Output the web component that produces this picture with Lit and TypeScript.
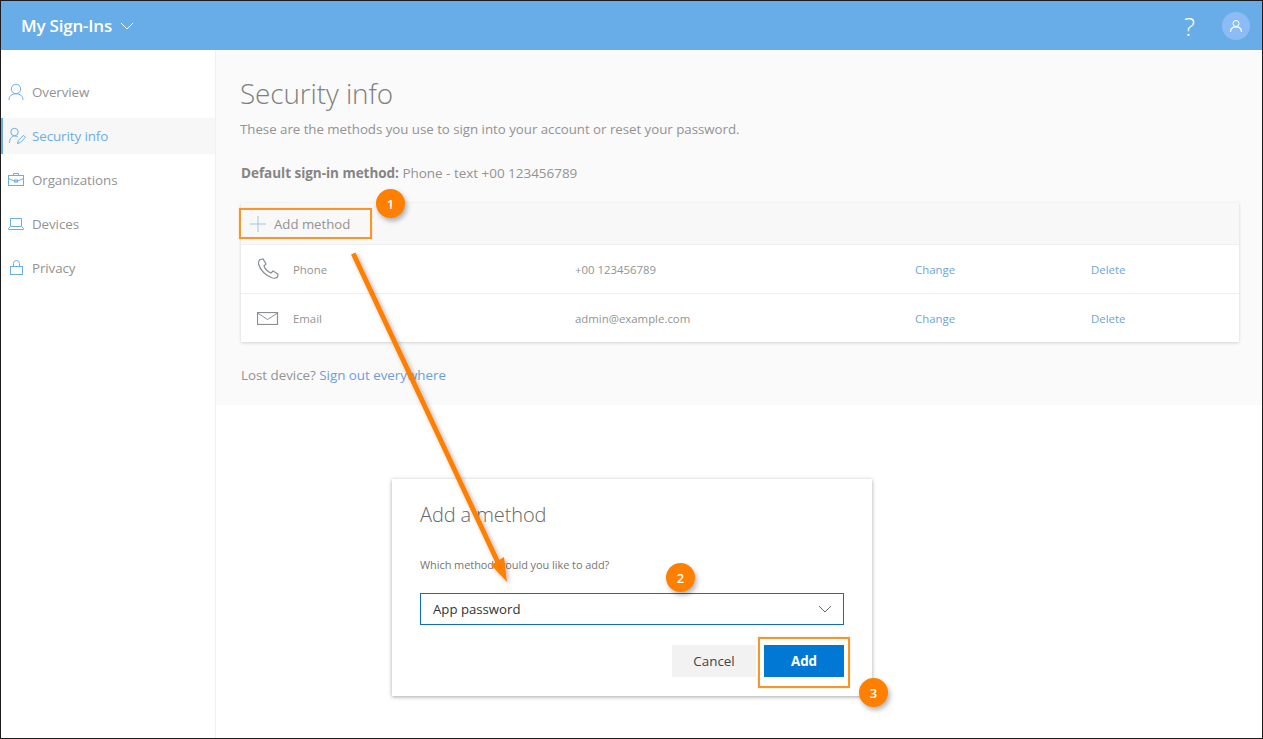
import { LitElement, html, svg, css } from "lit";
import { customElement } from "lit/decorators.js";

const I = (w: number, h: number, body: unknown, cls = "") =>
  html`<svg class=${cls} width=${w} height=${h} viewBox="0 0 ${w} ${h}" fill="none" stroke="currentColor" stroke-width="1">${body}</svg>`;

@customElement("app-root")
export class AppRoot extends LitElement {
  static styles = css`
    :host { display: block; font-family: "Open Sans", "Liberation Sans", sans-serif; }
    * { box-sizing: border-box; }
    .page { position: relative; width: 1263px; height: 739px; border: 1px solid #1c1c1c; background: #fff; overflow: hidden; display: flex; flex-direction: column; }
    .top { height: 49px; background: #68ade8; color: #fff; display: flex; align-items: center; padding: 0 12px 0 20px; flex: none; }
    .brand { font-size: 17px; font-weight: 600; letter-spacing: -0.2px; margin-top: -1px; }
    .chev { margin-left: 8px; margin-top: 0; }
    .spacer { flex: 1; }
    .help { font-size: 26px; font-weight: 300; margin-right: 27px; line-height: 1; }
    .avatar { width: 28px; height: 28px; border-radius: 50%; background: #8cbcf5; display: flex; align-items: center; justify-content: center; }
    .main { flex: 1; display: flex; min-height: 0; }
    .side { width: 215px; flex: none; border-right: 1px solid #f0f0f0; padding-top: 24px; }
    .nav { height: 36px; margin-bottom: 8px; display: flex; align-items: center; color: #939393; font-size: 13.400px; padding-left: 7px; gap: 6px; letter-spacing: -0.1px; }
    .nav svg { color: #6aaee8; flex: none; }
    .nav.on { background: #f7f7f7; color: #6aaee8; box-shadow: inset 2px 0 0 #6aaee8; }
    .content { flex: 1; min-width: 0; }
    .panel { height: 355px; background: #fafafa; padding: 24px 23px 0 25px; }
    h1 { margin: 0 0 0 -1px; font-size: 27.900px; line-height: 38px; font-weight: 300; color: #808080; letter-spacing: -0.1px; }
    .sub { font-size: 13.300px; line-height: 18px; color: #939393; margin: 8px 0 0 -1px; letter-spacing: -0.03px; }
    .def { font-size: 13.500px; line-height: 18px; color: #939393; margin-top: 26px; letter-spacing: -0.03px; }
    .def b { font-weight: 700; color: #848484; }
    .card { margin-top: 21px; background: #fff; box-shadow: 0 1px 3px rgba(0,0,0,.16); }
    .addrow { height: 41px; background: #f8f8f8; display: flex; align-items: center; padding-left: 8px; gap: 7px; color: #939393; font-size: 13.200px; }
    .addrow svg { color: #a3c4e8; }
    .row { height: 49px; display: grid; grid-template-columns: 52px 282px 340px 176px 1fr; align-items: center; font-size: 11.400px; color: #939393; border-top: 1px solid #f0f0f0; }
    .row:first-of-type { border-top: 0; }
    .ic { padding-left: 16px; display: flex; color: #8a8f96; }
    .link { color: #6da5dc; }
    .lost { font-size: 13.400px; color: #939393; margin-top: 24px; letter-spacing: -0.03px; }
    .lost a { color: #6b9fd6; }
    .modal { position: absolute; left: 391px; top: 478px; width: 480px; height: 217px; background: #fff; box-shadow: 0 1px 4px rgba(0,0,0,.35); padding: 21px 28px 0 28px; display: flex; flex-direction: column; }
    .modal h2 { margin: 0; font-size: 20px; line-height: 30px; font-weight: 300; color: #666; letter-spacing: -0.1px; }
    .q { font-size: 10.960px; line-height: 16px; color: #757575; margin-top: 27px; letter-spacing: -0.05px; }
    .select { margin-top: 20px; height: 32px; border: 1px solid #0a6fc2; display: flex; align-items: center; justify-content: space-between; padding: 0 11px 0 12px; font-size: 13.200px; color: #333; }
    .select svg { color: #666; }
    .actions { display: flex; justify-content: flex-end; gap: 8px; margin-top: 20px; }
    .btn { width: 84px; height: 32px; font-size: 13.400px; display: flex; align-items: center; justify-content: center; }
    .cancel { background: #f2f2f2; color: #444; }
    .add { width: 80px; background: #0078d4; color: #fff; font-weight: 700; }
    .mark { position: absolute; border: 2px solid #f9962b; box-shadow: 0 0 1px #fbb36a; }
    .m1 { left: 238px; top: 207px; width: 133px; height: 31px; }
    .m3 { left: 757px; top: 636px; width: 92px; height: 51px; }
    .badge { position: absolute; width: 29px; height: 29px; border-radius: 50%; background: #ff7f00; color: #fff; font-size: 13px; font-weight: 600; display: flex; align-items: center; justify-content: center; box-shadow: 2px 3px 5px rgba(0,0,0,.3); }
    .b1 { left: 375px; top: 188px; }
    .b2 { left: 665px; top: 562px; }
    .b3 { left: 858px; top: 677px; }
    .arrow { position: absolute; left: -1px; top: -1px; pointer-events: none; }
  `;

  render() {
    const nav = [
      ["Overview", I(18, 18, svg`<circle cx="8" cy="6" r="4.700"/><path d="M1 17c0-4.200 3-6.200 7-6.200s7 2 7 6.200"/>`)],
      ["Security info", I(18, 18, svg`<circle cx="6.500" cy="5" r="3.700"/><path d="M1.500 16c0-4.500 2.300-7 5-7 1.300 0 2.400.3 3.300 1"/><path d="M9.500 16.500l.8-3 5.200-5.200 2 2-5.200 5.200z"/>`)],
      ["Organizations", I(18, 18, svg`<rect x=".5" y="4.500" width="15" height="10"/><path d="M5.500 4.500V2.500h5v2M.5 7.500l5.500 2.500h4l5.500-2.500"/><rect x="6.500" y="9" width="3" height="2"/>`)],
      ["Devices", I(18, 18, svg`<path d="M2.500 11.500V3.500h11v8M.5 14.500h15v-1l-2-2h-11l-2 2z"/>`)],
      ["Privacy", I(18, 18, svg`<rect x="2.500" y="7.500" width="12" height="8"/><path d="M5.500 7.500V4.500a3 3 0 0 1 6 0v3"/>`)],
    ] as const;
    return html`<div class="page">
      <header class="top">
        <span class="brand">My Sign-Ins</span>
        ${I(14, 8, svg`<path d="M1 1l6 6 6-6"/>`, "chev")}
        <span class="spacer"></span>
        <span class="help">?</span>
        <span class="avatar">${I(14, 14, svg`<circle cx="7" cy="4.500" r="3"/><path d="M1.500 13c0-3.500 2.200-5.200 5.500-5.200s5.500 1.700 5.500 5.200" stroke-width="1.200"/>`)}</span>
      </header>
      <div class="main">
        <nav class="side">
          ${nav.map(([t, ic]) => html`<div class="nav ${t === "Security info" ? "on" : ""}">${ic}<span>${t}</span></div>`)}
        </nav>
        <div class="content">
          <section class="panel">
            <h1>Security info</h1>
            <div class="sub">These are the methods you use to sign into your account or reset your password.</div>
            <div class="def"><b>Default sign-in method:</b> Phone - text +00 123456789</div>
            <div class="card">
              <div class="addrow">${I(18, 18, svg`<path d="M9 1v16M1 9h16"/>`)}<span>Add method</span></div>
              <div class="row">
                <span class="ic">${I(22, 22, svg`<path d="M3 1.500l3-.5 3 5-2 2c1 3 3.500 5.500 7 7l2-2 5 3-.5 3c-1 1-3 1.500-5 1C9 18 3 12 1.500 6 1.200 4 2 2.500 3 1.500z" stroke-width="1.200"/>`)}</span>
                <span>Phone</span><span>+00 123456789</span><span class="link">Change</span><span class="link">Delete</span>
              </div>
              <div class="row">
                <span class="ic">${I(22, 13, svg`<rect x=".5" y=".5" width="20" height="12" stroke-width="1.200"/><path d="M.5 1l10 6.500L20.500 1"/>`)}</span>
                <span>Email</span><span>admin@example.com</span><span class="link">Change</span><span class="link">Delete</span>
              </div>
            </div>
            <div class="lost">Lost device? <a>Sign out everywhere</a></div>
          </section>
        </div>
      </div>
      <div class="modal">
        <h2>Add a method</h2>
        <div class="q">Which method would you like to add?</div>
        <div class="select"><span>App password</span>${I(14, 8, svg`<path d="M1 1l6 6 6-6"/>`)}</div>
        <div class="actions"><div class="btn cancel">Cancel</div><div class="btn add">Add</div></div>
      </div>
      <svg class="arrow" width="1263" height="739" viewBox="0 0 1263 739">
        <defs><filter id="s" x="-20%" y="-20%" width="140%" height="140%"><feDropShadow dx="2" dy="2" stdDeviation="2" flood-opacity=".3"/></filter></defs>
        <g filter="url(#s)" fill="#ff7f00" stroke="none">
          <path d="M351 254.500L355.500 252.500 L500 561 L495.500 563z"/>
          <path d="M507 582L491 565 L504 557z"/>
        </g>
      </svg>
      <div class="mark m1"></div>
      <div class="mark m3"></div>
      <div class="badge b1">1</div>
      <div class="badge b2">2</div>
      <div class="badge b3">3</div>
    </div>`;
  }
}
